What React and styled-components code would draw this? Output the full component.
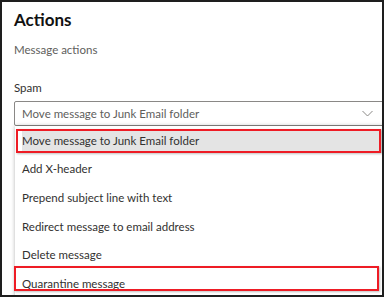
import React from "react";
import styled, { createGlobalStyle } from "styled-components";

const GlobalStyle = createGlobalStyle`
  html, body {
    margin: 0;
    padding: 0;
    background: #ffffff;
  }
  body {
    font-family: Lato, "Open Sans", Arial, sans-serif;
  }
`;

const Frame = styled.div`
  box-sizing: border-box;
  width: 384px;
  height: 297px;
  border: 2px solid #1e1e1e;
  background: #ffffff;
  padding: 6px 0 0 12px;
  overflow: hidden;
  display: flex;
  flex-direction: column;
`;

const Title = styled.h1`
  margin: 0;
  font-size: 17px;
  font-weight: 700;
  color: #111111;
  line-height: 24px;
  flex-shrink: 0;
`;

const Caption = styled.div`
  font-size: 11.5px;
  color: ${(p) => p.color || "#605e5c"};
  line-height: 16px;
  margin-top: ${(p) => p.gap}px;
  flex-shrink: 0;
`;

const Select = styled.div`
  box-sizing: border-box;
  flex-shrink: 0;
  margin-top: 5px;
  height: 25px;
  margin-right: -2px;
  border: 1px solid #8a8886;
  border-radius: 2px;
  display: flex;
  align-items: center;
  justify-content: space-between;
  padding: 0 10px 0 7px;
  font-size: 11.5px;
  color: #605e5c;
`;

const Menu = styled.ul`
  list-style: none;
  flex-shrink: 0;
  margin: 0 -2px 0 1px;
  padding: 0;
  background: #ffffff;
  box-shadow: 0 0 4px rgba(0, 0, 0, 0.3);
`;

const Item = styled.li`
  position: relative;
  height: 28.6px;
  display: flex;
  align-items: center;
  padding-left: 7px;
  font-size: 11.5px;
  color: #323130;
  box-sizing: border-box;
  background: ${(p) => (p.selected ? "#e4e4e4" : "transparent")};
  background-clip: content-box;
  padding-top: ${(p) => (p.selected ? "3px" : "0")};
  padding-bottom: ${(p) => (p.selected ? "2px" : "0")};

  &::after {
    content: "";
    display: ${(p) => (p.box ? "block" : "none")};
    position: absolute;
    top: ${(p) => p.box && p.box[0]}px;
    left: ${(p) => p.box && p.box[1]}px;
    right: ${(p) => p.box && p.box[2]}px;
    bottom: ${(p) => p.box && p.box[3]}px;
    border: 2px solid #ee1c25;
    box-shadow: 1px 1px 2px rgba(0, 0, 0, 0.25);
  }
`;

const Chevron = () => (
  <svg width="11" height="7" viewBox="0 0 11 7">
    <path d="M0.5 1 L5.5 6 L10.5 1" fill="none" stroke="#8a8886" strokeWidth="1" />
  </svg>
);

const options = [
  { label: "Move message to Junk Email folder", selected: true, box: [3, 1, 3, 1.6] },
  { label: "Add X-header" },
  { label: "Prepend subject line with text" },
  { label: "Redirect message to email address" },
  { label: "Delete message" },
  { label: "Quarantine message", box: [-3, -1, 5, 6.6] },
];

export default function App() {
  return (
    <>
      <GlobalStyle />
      <Frame>
        <Title>Actions</Title>
        <Caption gap={10}>Message actions</Caption>
        <Caption gap={22} color="#323130">Spam</Caption>
        <Select>
          <span>Move message to Junk Email folder</span>
          <Chevron />
        </Select>
        <Menu>
          {options.map((o) => (
            <Item key={o.label} selected={o.selected} box={o.box}>
              {o.label}
            </Item>
          ))}
        </Menu>
      </Frame>
    </>
  );
}
